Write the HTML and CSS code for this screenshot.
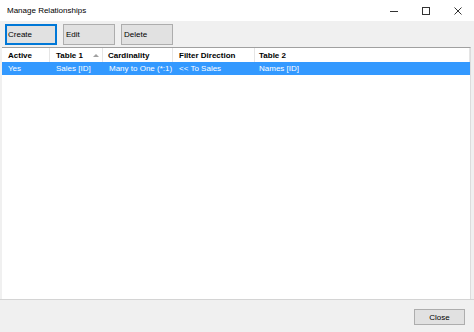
FILE: index.html
```html
<!DOCTYPE html>
<html>
<head>
<meta charset="utf-8">
<link rel="stylesheet" href="styles.css">
</head>
<body>
<div class="window">
  <div class="titlebar">
    <span class="title">Manage Relationships</span>
    <div class="controls">
      <span class="ctl"><svg width="8" height="8" viewBox="0 0 8 8"><path d="M0 4.5h8" stroke="#333" stroke-width="1"/></svg></span>
      <span class="ctl"><svg width="8" height="8" viewBox="0 0 8 8"><rect x="0.5" y="0.5" width="7" height="7" fill="none" stroke="#333" stroke-width="1"/></svg></span>
      <span class="ctl"><svg width="8" height="8" viewBox="0 0 8 8"><path d="M0.5 0.5L7.5 7.5M7.5 0.5L0.5 7.5" stroke="#333" stroke-width="1"/></svg></span>
    </div>
  </div>
  <div class="toolbar">
    <button class="btn focused">Create</button>
    <button class="btn">Edit</button>
    <button class="btn">Delete</button>
  </div>
  <div class="list">
    <div class="row head">
      <div class="c c1">Active</div>
      <div class="c c2">Table 1<span class="sort"></span></div>
      <div class="c c3">Cardinality</div>
      <div class="c c4">Filter Direction</div>
      <div class="c c5">Table 2</div>
    </div>
    <div class="row sel">
      <div class="c c1">Yes</div>
      <div class="c c2">Sales [ID]</div>
      <div class="c c3">Many to One (*:1)</div>
      <div class="c c4">&lt;&lt; To Sales</div>
      <div class="c c5">Names [ID]</div>
    </div>
  </div>
  <div class="footer">
    <button class="btn close">Close</button>
  </div>
</div>
</body>
</html>
```
FILE: styles.css
```css
html, body {
  margin: 0;
  padding: 0;
}
body {
  width: 474px;
  height: 332px;
  overflow: hidden;
  font-family: "Liberation Sans", Arial, sans-serif;
  font-size: 8px;
  color: #000;
}
.window {
  display: flex;
  flex-direction: column;
  height: 332px;
  background: #f0f0f0;
}
.titlebar {
  height: 21px;
  background: #fff;
  display: flex;
  align-items: center;
  padding-left: 7px;
  flex: none;
}
.title {
  font-size: 8px;
  margin-top: -1px;
}
.controls {
  margin-left: auto;
  display: flex;
  margin-right: 12px;
  gap: 24px;
  margin-top: 1px;
}
.ctl {
  width: 8px;
  height: 8px;
  display: flex;
}
.toolbar {
  height: 26px;
  flex: none;
  display: flex;
  align-items: flex-start;
  padding: 3px 0 0 5px;
  box-sizing: border-box;
  gap: 6px;
}
.btn {
  font-family: "Liberation Sans", Arial, sans-serif;
  font-size: 8px;
  color: #000;
  background: #e1e1e1;
  border: 1px solid #adadad;
  width: 52px;
  height: 21px;
  padding: 0 0 0 2px;
  text-align: left;
  margin: 0;
  box-sizing: border-box;
}
.btn.focused {
  border-color: #0078d7;
  box-shadow: inset 0 0 0 1px #0078d7;
}
.list {
  flex: 1;
  margin: 0 3px 0 2px;
  background: #fff;
  border-top: 1px solid #a0a0a0;
  border-right: 1px solid #dcdcdc;
}
.row {
  display: flex;
  height: 13px;
  align-items: center;
}
.row.head {
  height: 14px;
  font-weight: bold;
}
.row.sel {
  background: #3399ff;
  color: #fff;
}
.c {
  box-sizing: border-box;
  padding-left: 6px;
  white-space: nowrap;
  height: 100%;
  display: flex;
  align-items: center;
  position: relative;
}
.head .c {
  border-right: 1px solid #e5e5e5;
}
.c1 { width: 48px; }
.c2 { width: 53px; }
.c3 { width: 70px; padding-left: 5px; }
.c4 { width: 82px; }
.c5 { width: 215px; padding-left: 4px; }
.sel .c3 { padding-left: 6px; }
.sort {
  position: absolute;
  left: 43px;
  top: 6px;
  width: 0;
  height: 0;
  border-left: 3px solid transparent;
  border-right: 3px solid transparent;
  border-bottom: 3px solid #a0a0a0;
}
.footer {
  height: 33px;
  flex: none;
  border-top: 1px solid #d4d4d4;
  box-sizing: border-box;
  display: flex;
  justify-content: flex-end;
  padding: 9px 9px 0 0;
}
.btn.close {
  width: 51px;
  height: 16px;
  padding: 0;
  text-align: center;
}
```
